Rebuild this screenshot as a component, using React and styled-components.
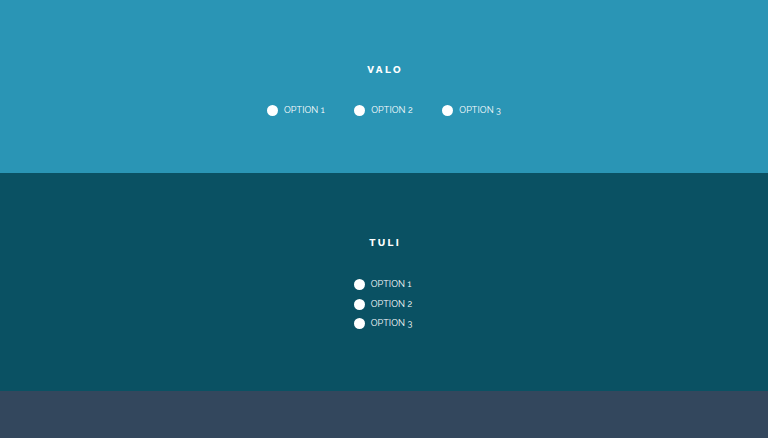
import styled, { createGlobalStyle } from "styled-components";

const GlobalStyle = createGlobalStyle`
  html, body {
    margin: 0;
    padding: 0;
    background: #33475d;
    font-family: "Raleway", Lato, "Open Sans", sans-serif;
  }
`;

const Page = styled.div`
  width: 100%;
  height: 438px;
  display: flex;
  flex-direction: column;
  overflow: hidden;
`;

const Section = styled.section`
  background: ${props => props.bg};
  height: ${props => props.h}px;
  flex-shrink: 0;
  display: flex;
  flex-direction: column;
  align-items: center;
  padding-top: ${props => props.top}px;
  box-sizing: border-box;
`;

const Filler = styled.div`
  flex: 1;
  background: #33475d;
`;

const Title = styled.h2`
  margin: 0;
  color: #ffffff;
  font-size: 10px;
  font-weight: 800;
  letter-spacing: 2.4px;
  line-height: 14px;
  padding-left: 2.4px;
`;

const Group = styled.div`
  display: flex;
  flex-direction: ${props => (props.vertical ? "column" : "row")};
  gap: ${props => (props.vertical ? "6px" : "29.5px")};
  margin-top: ${props => props.mt}px;
  margin-right: ${props => (props.vertical ? 2 : 0)}px;
`;

const Option = styled.label`
  display: flex;
  align-items: center;
  gap: 6px;
  color: #ffffff;
  font-size: 9px;
  line-height: 13.5px;
  letter-spacing: 0.1px;
  cursor: pointer;
`;

const Dot = styled.span`
  width: 11px;
  height: 11px;
  border-radius: 50%;
  background: #ffffff;
  flex-shrink: 0;
`;

const options = ["OPTION 1", "OPTION 2", "OPTION 3"];

export default function App() {
  return (
    <Page>
      <GlobalStyle />
      <Section bg="#2a95b5" h={173} top={63}>
        <Title>VALO</Title>
        <Group mt={27}>
          {options.map(o => (
            <Option key={o}>
              <Dot />
              {o}
            </Option>
          ))}
        </Group>
      </Section>
      <Section bg="#0a5163" h={218} top={63}>
        <Title>TULI</Title>
        <Group vertical mt={28}>
          {options.map(o => (
            <Option key={o}>
              <Dot />
              {o}
            </Option>
          ))}
        </Group>
      </Section>
      <Filler />
    </Page>
  );
}
